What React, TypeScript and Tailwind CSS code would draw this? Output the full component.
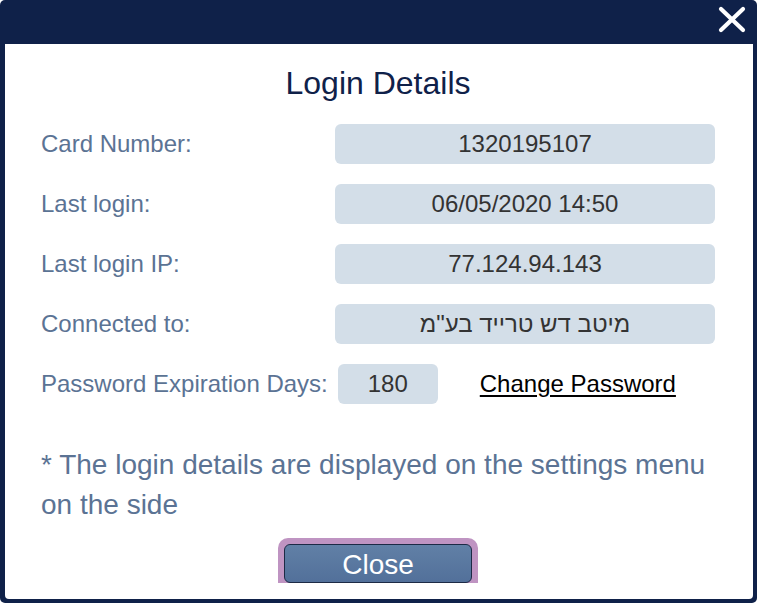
const rows = [
  { label: 'Card Number:', value: '1320195107' },
  { label: 'Last login:', value: '06/05/2020 14:50' },
  { label: 'Last login IP:', value: '77.124.94.143' },
  { label: 'Connected to:', value: 'מיטב דש טרייד בע"מ', rtl: true },
];

export default function App() {
  return (
    <div className="w-[760px] h-[604px] bg-white font-['Liberation_Sans',Arial,sans-serif]">
      <div className="w-[757px] h-[603px] bg-[#0f2149] rounded-[5px] flex flex-col pl-[5px] pr-[4px] pb-[4px]">
        {/* Header bar */}
        <div className="h-[44px] shrink-0 flex justify-end items-start pt-[6px] pr-[7px]">
          <button className="text-white">
            <svg width="28" height="27" viewBox="0 0 28 27" fill="none">
              <path d="M3 3 L25 24 M25 3 L3 24" stroke="white" strokeWidth="4.2" strokeLinecap="round" />
            </svg>
          </button>
        </div>

        {/* Body */}
        <div className="flex-1 bg-white rounded-b-[4px] pl-[36px] pr-[38px] flex flex-col">
          <h2 className="mt-[19px] h-[40px] leading-[40px] text-[32px] text-center text-[#0f2149]">Login Details</h2>

          <div className="mt-[21px] flex flex-col gap-[20px]">
            {rows.map((r) => (
              <div key={r.label} className="flex items-center h-[40px]">
                <span className="w-[294px] text-[24px] text-[#5b7394]">{r.label}</span>
                <div
                  dir={r.rtl ? 'rtl' : undefined}
                  className="w-[380px] h-[40px] rounded-[6px] bg-[#d3dee8] flex items-center justify-center text-[24px] text-[#333333]"
                >
                  {r.value}
                </div>
              </div>
            ))}
            <div className="flex items-center h-[40px]">
              <span className="text-[24px] text-[#5b7394]">Password Expiration Days:</span>
              <div className="ml-[10px] w-[100px] h-[40px] rounded-[6px] bg-[#d3dee8] flex items-center justify-center text-[24px] text-[#333333]">
                180
              </div>
              <a href="#" className="ml-[42px] text-[24px] text-black underline underline-offset-[3px]">
                Change Password
              </a>
            </div>
          </div>

          <p className="mt-[41px] text-[28px] leading-[40px] text-[#5b7394]">
            * The login details are displayed on the settings menu on the side
          </p>

          <div className="mt-[13px] self-center w-[200px] bg-[#bf94c2] rounded-t-[10px] pt-[6px] px-[6px]">
            <button className="w-[188px] h-[39px] rounded-[6px] border border-[#1c2a45] bg-gradient-to-b from-[#6180a6] to-[#52709a] text-white text-[28px] leading-[40px]">
              Close
            </button>
          </div>
        </div>
      </div>
    </div>
  );
}
